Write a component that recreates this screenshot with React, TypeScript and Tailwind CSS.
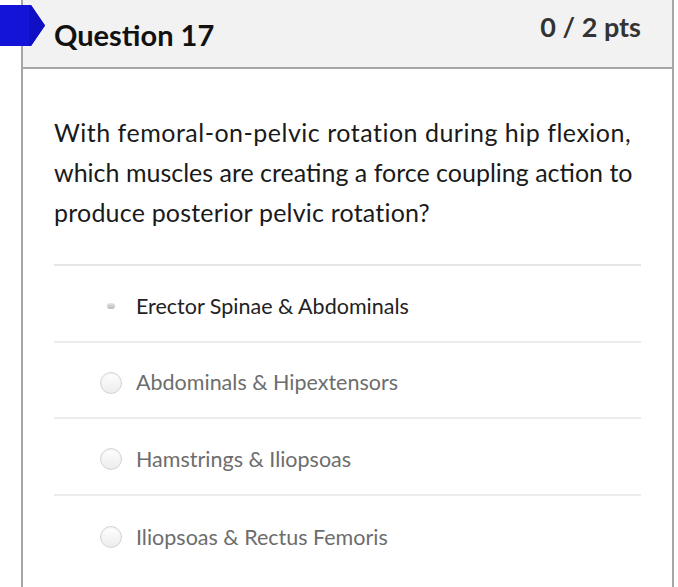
const ANSWERS = [
  { label: "Erector Spinae & Abdominals", selected: true },
  { label: "Abdominals & Hipextensors", selected: false },
  { label: "Hamstrings & Iliopsoas", selected: false },
  { label: "Iliopsoas & Rectus Femoris", selected: false },
];

function Radio({ selected }: { selected: boolean }) {
  if (selected) {
    return (
      <span className="flex h-[22px] w-[22px] items-center justify-center">
        <span className="h-[6px] w-[8px] rounded-full bg-gradient-to-b from-[#e6e6e6] to-[#b9b9b9]" />
      </span>
    );
  }
  return (
    <span className="h-[22px] w-[22px] rounded-full border border-[#d4d4d4] bg-gradient-to-b from-[#ffffff] to-[#ececec] shadow-[inset_0_1px_2px_rgba(0,0,0,0.06)]" />
  );
}

export default function App() {
  return (
    <div className="relative h-[587px] w-[678px] overflow-hidden bg-white font-['Lato','Liberation_Sans',sans-serif]">
      {/* blue marker */}
      <svg className="absolute left-0 top-[5px] z-10" width="46" height="42" viewBox="0 0 46 42">
        <polygon points="0,0 31,0 45,20.5 31,41 0,41" fill="#1414d9" />
        <polygon points="29,0 31,0 45,20.5 31,41 29,41" fill="#0f0fc4" />
      </svg>

      <div className="ml-[21px] h-full w-[653px] border-x-2 border-[#a6a6a6]">
        {/* header */}
        <div className="flex h-[69px] items-start justify-between border-b-2 border-[#a6a6a6] bg-[#f2f2f2] px-[31px]">
          <h2 className="pt-[16px] text-[29px] font-bold leading-[38px] text-[#111]">Question 17</h2>
          <span className="pt-[10px] text-[27px] font-bold leading-[34px] text-[#333]">0 / 2 pts</span>
        </div>

        <div className="px-[31px]">
          <p className="mr-[-24px] pt-[43px] text-[25px] leading-[40px] text-[#1a1a1a]">
            <span className="tracking-[0.5px]">With femoral-on-pelvic rotation during hip flexion,</span>
            <br />
            which muscles are creating a force coupling action to
            <br />
            <span className="tracking-[0.2px]">produce posterior pelvic rotation?</span>
          </p>

          <div className="mt-[32px] border-t-2 border-[#e6e6e6]">
            {ANSWERS.map((a, i) => (
              <div
                key={a.label}
                className={`flex h-[76.7px] items-center gap-[14px] pl-[46px] pt-[5px] ${
                  i < ANSWERS.length - 1 ? "border-b-2 border-[#ececec]" : ""
                }`}
              >
                <Radio selected={a.selected} />
                <span className={`text-[21.5px] ${a.selected ? "text-[#222]" : "text-[#6d6d6d]"}`}>{a.label}</span>
              </div>
            ))}
          </div>
        </div>
      </div>
    </div>
  );
}
